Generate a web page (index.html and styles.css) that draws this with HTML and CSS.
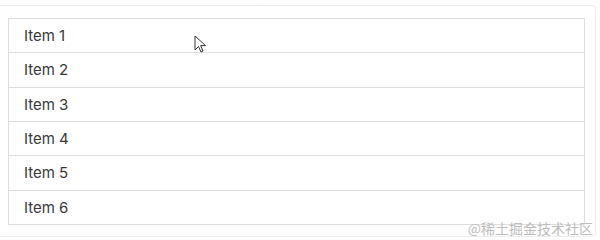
FILE: index.html
```html
<!DOCTYPE html>
<html lang="zh">
<head>
<meta charset="utf-8">
<link rel="stylesheet" href="styles.css">
</head>
<body>
<div class="card">
  <ul class="list">
    <li class="item">Item 1</li>
    <li class="item">Item 2</li>
    <li class="item">Item 3</li>
    <li class="item">Item 4</li>
    <li class="item">Item 5</li>
    <li class="item">Item 6</li>
  </ul>
  <div class="watermark">@稀土掘金技术社区</div>
  <svg class="cursor" width="14" height="20" viewBox="0 0 14 20"><path d="M1 1 L1 15 L4.5 11.5 L7 17 L9 16 L6.6 10.6 L11.5 10.6 Z" fill="#fff" stroke="#333" stroke-width="1" stroke-linejoin="round"/></svg>
</div>
</body>
</html>
```
FILE: styles.css
```css
html, body {
  margin: 0;
  padding: 0;
  background: #fff;
}
body {
  width: 600px;
  height: 240px;
  overflow: hidden;
  font-family: Inter, "Noto Sans", sans-serif;
}
.card {
  position: relative;
  box-sizing: border-box;
  margin: 5px 0 0 -4px;
  width: 600px;
  height: 232px;
  border: 1px solid #eeeeee;
  border-radius: 4px;
  padding: 12px 10px 0 11px;
}
.list {
  list-style: none;
  margin: 0;
  padding: 0;
  border: 1px solid #dedede;
  border-bottom: none;
}
.item {
  box-sizing: border-box;
  height: 34.33px;
  border-bottom: 1px solid #dedede;
  padding-left: 15px;
  display: flex;
  align-items: center;
  font-size: 15px;
  color: #3a3a3a;
}
.watermark {
  position: absolute;
  right: 2px;
  bottom: 0;
  font-family: "Noto Sans CJK SC", sans-serif;
  font-size: 14px;
  line-height: 16px;
  color: #bdbdbd;
}
.cursor {
  position: absolute;
  left: 197px;
  top: 29px;
}
```
